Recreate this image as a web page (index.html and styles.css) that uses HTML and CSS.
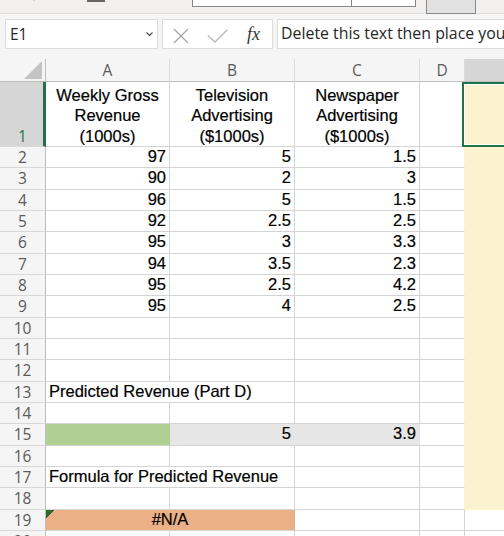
FILE: index.html
```html
<!DOCTYPE html>
<html lang="en">
<head>
<meta charset="utf-8">
<title>Sheet</title>
<link rel="stylesheet" href="styles.css">
</head>
<body>
<div class="app">
  <div class="ribbon">
    <span class="rb-dot"></span>
    <span class="rb-bar"></span>
    <span class="rb-field"><span class="rb-field-a"></span></span>
    <span class="rb-btn"></span>
  </div>
  <div class="fbar">
    <div class="namebox">
      <span>E1</span>
      <svg class="chev" width="7" height="4" viewBox="0 0 7 4"><path d="M0.5 0.5 L3.5 3.5 L6.5 0.5" fill="none" stroke="#505050" stroke-width="1.2"/></svg>
    </div>
    <div class="fxbox">
      <svg class="ic-x" width="16" height="16" viewBox="0 0 16 16"><path d="M1 1 L15 15 M15 1 L1 15" stroke="#a6a6a6" stroke-width="1.3" fill="none"/></svg>
      <svg class="ic-check" width="21" height="14" viewBox="0 0 21 14"><path d="M0.8 6.5 L8 13 L20.3 0.8" stroke="#b8b8b8" stroke-width="1.3" fill="none"/></svg>
      <span class="fx">fx</span>
    </div>
    <div class="finput">Delete this text then place you</div>
  </div>
  <div class="sheet">
    <div class="ch corner"><svg width="18" height="18" viewBox="0 0 18 18"><path d="M18 0 L18 18 L0 18 Z" fill="#c4c4c4"/></svg></div>
    <div class="ch">A</div>
    <div class="ch">B</div>
    <div class="ch">C</div>
    <div class="ch">D</div>
    <div class="ch che"></div>

    <div class="rh rh1">1</div>
    <div class="hdr"><div>Weekly Gross<br>Revenue<br>(1000s)</div></div>
    <div class="hdr"><div>Television<br>Advertising<br>($1000s)</div></div>
    <div class="hdr"><div>Newspaper<br>Advertising<br>($1000s)</div></div>
    <div class="dy"></div>
    <div class="y sel"></div>

    <div class="rh">2</div><div class="num">97</div><div class="num">5</div><div class="num">1.5</div><div class="dy"></div><div class="y"></div>
    <div class="rh">3</div><div class="num">90</div><div class="num">2</div><div class="num">3</div><div class="dy"></div><div class="y"></div>
    <div class="rh">4</div><div class="num">96</div><div class="num">5</div><div class="num">1.5</div><div class="dy"></div><div class="y"></div>
    <div class="rh">5</div><div class="num">92</div><div class="num">2.5</div><div class="num">2.5</div><div class="dy"></div><div class="y"></div>
    <div class="rh">6</div><div class="num">95</div><div class="num">3</div><div class="num">3.3</div><div class="dy"></div><div class="y"></div>
    <div class="rh">7</div><div class="num">94</div><div class="num">3.5</div><div class="num">2.3</div><div class="dy"></div><div class="y"></div>
    <div class="rh">8</div><div class="num">95</div><div class="num">2.5</div><div class="num">4.2</div><div class="dy"></div><div class="y"></div>
    <div class="rh">9</div><div class="num">95</div><div class="num">4</div><div class="num">2.5</div><div class="dy"></div><div class="y"></div>
    <div class="rh">10</div><div></div><div></div><div></div><div class="dy"></div><div class="y"></div>
    <div class="rh">11</div><div></div><div></div><div></div><div class="dy"></div><div class="y"></div>
    <div class="rh">12</div><div></div><div></div><div></div><div class="dy"></div><div class="y"></div>
    <div class="rh">13</div><div class="span2">Predicted Revenue (Part D)</div><div></div><div class="dy"></div><div class="y"></div>
    <div class="rh">14</div><div></div><div></div><div></div><div class="dy"></div><div class="y"></div>
    <div class="rh">15</div><div class="green"></div><div class="num gray">5</div><div class="num gray">3.9</div><div class="dy"></div><div class="y"></div>
    <div class="rh">16</div><div></div><div></div><div></div><div class="dy"></div><div class="y"></div>
    <div class="rh">17</div><div class="span2">Formula for Predicted Revenue</div><div></div><div class="dy"></div><div class="y"></div>
    <div class="rh">18</div><div></div><div></div><div></div><div class="dy"></div><div class="y"></div>
    <div class="rh">19</div><div class="orange">#N/A</div><div></div><div></div><div></div>
    <div class="rh">20</div><div></div><div></div><div></div><div></div><div></div>
  </div>
</div>
</body>
</html>
```
FILE: styles.css
```css
* { box-sizing: border-box; }
html, body { margin: 0; padding: 0; }
body {
  width: 504px;
  height: 536px;
  overflow: hidden;
  background: #f5f5f5;
  font-family: "Open Sans", "Noto Sans", sans-serif;
}
.app { width: 504px; height: 536px; overflow: hidden; }

/* top ribbon fragment */
.ribbon {
  height: 14px;
  background: #f1f0ef;
  border-bottom: 1px solid #e0e0e0;
  display: flex;
  align-items: flex-start;
}
.rb-dot { width: 2px; height: 1px; background: #d2d2d2; margin-left: 33px; flex: none; }
.rb-bar { width: 18px; height: 2px; background: #666; margin-left: 52px; flex: none; }
.rb-field {
  flex: none;
  margin-left: 87px;
  width: 224px;
  height: 7px;
  background: #fff;
  border: 1px solid #8a8886;
  border-top: 0;
  display: flex;
}
.rb-field-a { width: 159px; border-right: 1px solid #8a8886; }
.rb-btn {
  flex: none;
  margin-left: 10px;
  width: 50px;
  height: 14px;
  background: #e1e1e1;
  border: 1px solid #8a8886;
  border-top: 0;
}

/* formula bar */
.fbar {
  height: 45px;
  display: flex;
  gap: 4px;
  padding: 5px 0 10px 5px;
  color: #262626;
}
.fbar > div {
  flex: none;
  height: 30px;
  background: #fff;
  border: 1px solid #dcdcdc;
}
.namebox {
  width: 153px;
  display: flex;
  align-items: center;
  justify-content: space-between;
  padding: 0 4px;
  font-size: 15.5px;
  line-height: 26px;
}
.fxbox {
  width: 111px;
  display: flex;
  align-items: center;
}
.ic-x { margin-left: 10px; margin-top: 3px; flex: none; }
.ic-check { margin-left: 18px; margin-top: 3px; flex: none; }
.fx {
  margin-left: 19px;
  font-family: "Liberation Serif", "DejaVu Serif", serif;
  font-style: italic;
  font-size: 18px;
  color: #333;
  line-height: 20px;
}
.finput {
  width: 240px;
  padding-left: 3px;
  font-size: 15.9px;
  line-height: 26px;
  white-space: nowrap;
  overflow: hidden;
}

/* sheet grid */
.sheet {
  display: grid;
  grid-template-columns: 46px 124px 125px 125px 45px 125px;
  grid-template-rows: 23px 65px repeat(19, 21.333px);
  width: 590px;
  font-family: "Liberation Sans", Arial, sans-serif;
  font-size: 16.5px;
  color: #000;
  -webkit-text-stroke: 0.2px #000;
}
.sheet > div {
  background: #fff;
  border-right: 1px solid #d4d4d4;
  border-bottom: 1px solid #d4d4d4;
  padding: 0 3px;
  line-height: 19.5px;
  white-space: nowrap;
}
.sheet > .ch {
  background: #f5f5f5;
  font-family: "Open Sans", "Noto Sans", sans-serif;
  font-size: 15.5px;
  color: #5a5a5a;
  -webkit-text-stroke: 0;
  text-align: center;
  line-height: 22px;
  border-right-color: #dadada;
  border-bottom-color: #bdbdbd;
  padding: 0;
}
.sheet > .corner {
  display: flex;
  justify-content: flex-end;
  align-items: flex-end;
  padding: 0 3px 2px 0;
  border-right-color: #bdbdbd;
}
.corner svg { display: block; }
.sheet > .che { background: #d6d6d6; }
.sheet > .rh {
  background: #f5f5f5;
  font-family: "Open Sans", "Noto Sans", sans-serif;
  font-size: 15.5px;
  color: #5a5a5a;
  -webkit-text-stroke: 0;
  text-align: center;
  line-height: 20px;
  border-right-color: #bdbdbd;
  border-bottom-color: #d8d8d8;
  padding: 0;
}
.sheet > .rh1 {
  background: #d6d6d6;
  color: #217346;
  border-right: 3px solid #217346;
  display: flex;
  align-items: flex-end;
  justify-content: center;
  padding-left: 2px;
}
.sheet > .hdr {
  display: flex;
  flex-direction: column;
  justify-content: flex-end;
  text-align: center;
  line-height: 20.3px;
}
.sheet > .num { text-align: right; }
.sheet > .span2 { grid-column: span 2; }
.sheet > .y { background: #fdf2cf; border-bottom-color: #fdf2cf; }
.sheet > .dy { border-right-color: #fdf2cf; }
.sheet > .sel { position: relative; }
.sel::after {
  content: "";
  position: absolute;
  left: -3px;
  top: 0;
  bottom: -1px;
  right: -4px;
  border: 2px solid #217346;
  box-shadow: inset 0 0 0 1px #ffffff;
}
.sheet > .green { background: #b0cf93; border-right-color: #b0cf93; }
.sheet > .gray { background: #e6e6e6; border-right-color: #e6e6e6; }
.sheet > .orange {
  grid-column: span 2;
  text-align: center;
  background: linear-gradient(135deg, #2e6a2a 0, #2e6a2a 5.7px, transparent 5.7px), #ecb087;
  border-right-color: #ecb087;
}
```
